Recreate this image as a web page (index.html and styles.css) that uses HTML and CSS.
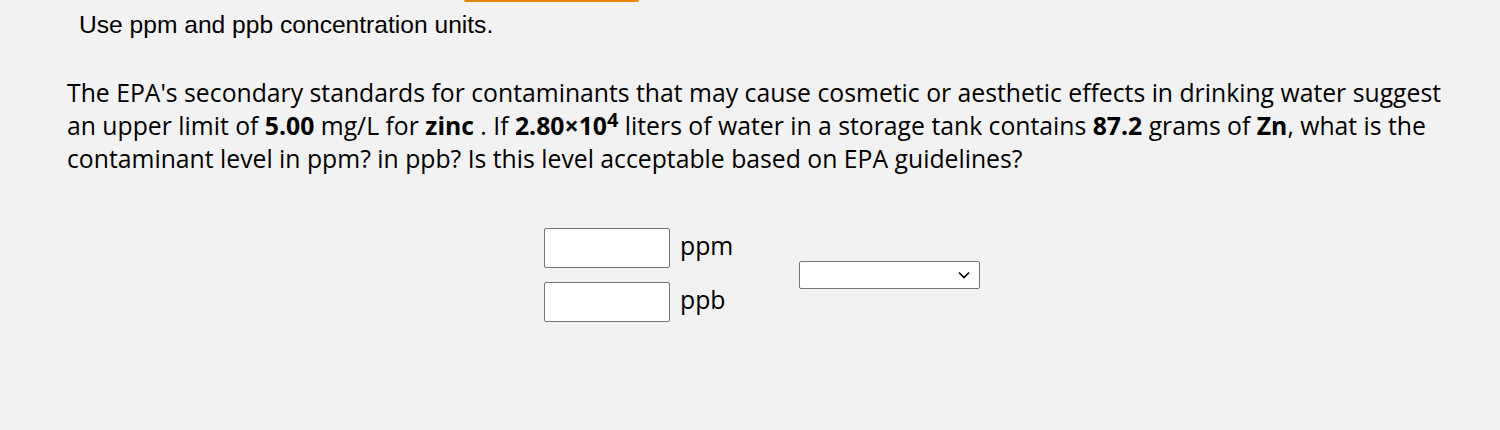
FILE: index.html
```html
<!DOCTYPE html>
<html>
<head>
<meta charset="utf-8">
<link rel="stylesheet" href="styles.css">
</head>
<body>
<div class="page">
  <div class="tabbar"><div class="tab"></div></div>
  <p class="instr">Use ppm and ppb concentration units.</p>
  <p class="question">The EPA's secondary standards for contaminants that may cause cosmetic or aesthetic effects in drinking water suggest an upper limit of <b>5.00</b> mg/L for <b>zinc</b> . If <b>2.80×10<sup>4</sup></b> liters of water in a storage tank contains <b>87.2</b> grams of <b>Zn</b>, what is the contaminant level in ppm? in ppb? Is this level acceptable based on EPA guidelines?</p>
  <div class="answers">
    <div class="inputs">
      <div class="row"><input class="box" type="text"><span class="unit">ppm</span></div>
      <div class="row"><input class="box" type="text"><span class="unit">ppb</span></div>
    </div>
    <select class="choice"><option></option></select>
  </div>
</div>
</body>
</html>
```
FILE: styles.css
```css
html, body { margin: 0; padding: 0; }
body { background: #f2f2f2; width: 1500px; height: 430px; overflow: hidden; }
.page { color: #000; }
.tabbar { height: 2px; padding-left: 464px; }
.tab { width: 175px; height: 2px; background: #e8870c; border-radius: 0 0 4px 4px; }
.instr {
  margin: 0; padding: 9px 0 0 79px;
  font-family: "Liberation Sans", Arial, sans-serif; font-size: 24.6px; line-height: 28px;
}
.question {
  margin: 0; padding: 37px 0 0 67px; width: 1400px;
  font-family: "Open Sans", sans-serif; font-size: 24.75px; line-height: 33px;
}
.question b { font-weight: 700; }
.question sup { font-size: 20px; line-height: 0; vertical-align: 8px; }
.answers { display: flex; align-items: center; padding: 53px 0 0 544px; gap: 66px; }
.inputs { display: flex; flex-direction: column; gap: 14px; }
.row { display: flex; align-items: center; gap: 10px; }
.box {
  box-sizing: border-box; width: 126px; height: 40px; margin: 0;
  border: 1px solid #767676; border-radius: 2px; background: #fff;
}
.unit { font-family: "Open Sans", sans-serif; font-size: 24.8px; line-height: 30px; margin-top: -6px; }
.choice {
  box-sizing: border-box; width: 181px; height: 28px; margin: 0;
  border: 1px solid #767676; border-radius: 2px; background: #fff;
  -webkit-appearance: none; appearance: none;
  background-image: url("data:image/svg+xml;utf8,<svg xmlns='http://www.w3.org/2000/svg' width='12' height='8'><path d='M1 1.5 L6 6.5 L11 1.5' fill='none' stroke='black' stroke-width='1.6'/></svg>");
  background-repeat: no-repeat; background-position: right 9px center;
}
```
